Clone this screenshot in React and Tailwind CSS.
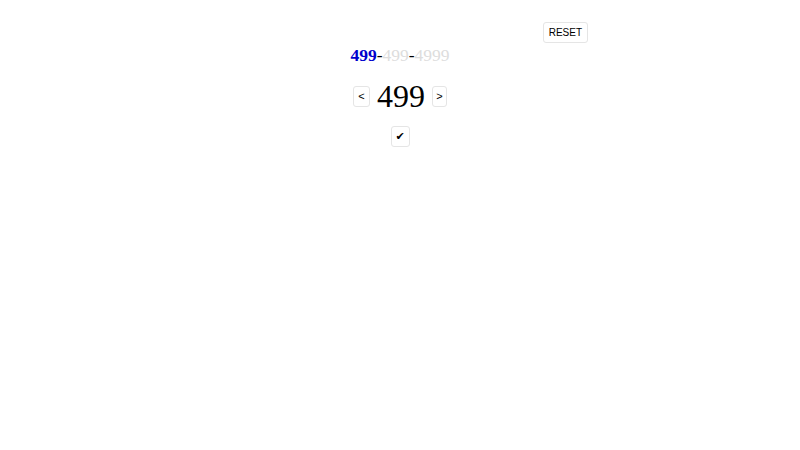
import React from 'react';

export default function App() {
  return (
    <div className="w-[800px] h-[450px] bg-white">
      <div className="w-[376px] mx-auto pt-[22px] flex justify-end">
        <button className="h-[21px] px-[5px] text-[10px] leading-none text-black bg-white border border-[#e5e5e5] rounded-[3px] font-['Liberation_Sans',sans-serif]">
          RESET
        </button>
      </div>
      <div className="flex justify-center mt-[1px] font-['Liberation_Serif',serif] text-[17.5px] leading-[22px]">
        <span className="font-bold text-[#0000cc]">499</span>
        <span className="text-black">-</span>
        <span className="text-[#dddddd]">499</span>
        <span className="text-black">-</span>
        <span className="text-[#dddddd]">4999</span>
      </div>
      <div className="flex justify-center items-center gap-[7px] mt-[12px] font-['Liberation_Serif',serif]">
        <button className="w-[17px] h-[21px] text-[11px] leading-none bg-white border border-[#e5e5e5] rounded-[3px] font-['Liberation_Sans',sans-serif] text-black">&lt;</button>
        <span className="text-[32px] leading-[36px] text-black">499</span>
        <button className="w-[15px] h-[21px] text-[11px] leading-none bg-white border border-[#e5e5e5] rounded-[3px] font-['Liberation_Sans',sans-serif] text-black">&gt;</button>
      </div>
      <div className="flex justify-center mt-[12px]">
        <button className="w-[19px] h-[21px] text-[11px] leading-none bg-white border border-[#e5e5e5] rounded-[3px] text-black font-['DejaVu_Sans',sans-serif]">✔</button>
      </div>
    </div>
  );
}
